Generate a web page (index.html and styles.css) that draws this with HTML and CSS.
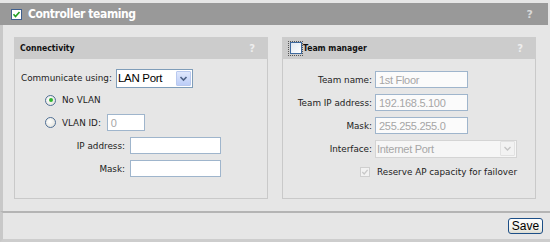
FILE: index.html
```html
<!DOCTYPE html>
<html>
<head>
<meta charset="utf-8">
<link rel="stylesheet" href="styles.css">
</head>
<body>
<div class="page">
  <div class="titlebar">
    <span class="tchk">
      <svg width="11" height="11" viewBox="0 0 11 11"><rect x="0.5" y="0.5" width="10" height="10" fill="#fff" stroke="#3f5f8f"/><path d="M2.5 5.3 L4.5 7.5 L8.5 3" fill="none" stroke="#22a022" stroke-width="1.6"/></svg>
    </span>
    <span class="title">Controller teaming</span>
    <span class="help big">?</span>
  </div>
  <div class="content">
    <div class="panel">
      <div class="phead">
        <span class="ptitle">Connectivity</span>
        <span class="help">?</span>
      </div>
      <div class="pbody lbody">
        <div class="row comm">
          <span class="lbl cw">Communicate using:</span>
          <span class="sel">
            <span class="seltxt">LAN Port</span>
            <span class="arrow"><svg width="13" height="13" viewBox="0 0 13 13"><path d="M3.5 5 L6.5 8 L9.5 5" fill="none" stroke="#4d6185" stroke-width="1.6"/></svg></span>
          </span>
        </div>
        <div class="row rad">
          <span class="radio on"><span class="dot"></span></span>
          <span class="lbl rl">No VLAN</span>
        </div>
        <div class="row rad tall">
          <span class="radio"></span>
          <span class="lbl rl">VLAN ID:</span>
          <span class="inp vid">0</span>
        </div>
        <div class="row fld tall">
          <span class="lbl fw">IP address:</span>
          <span class="inp wide"></span>
        </div>
        <div class="row fld tall">
          <span class="lbl fw">Mask:</span>
          <span class="inp wide"></span>
        </div>
      </div>
    </div>
    <div class="panel">
      <div class="phead">
        <span class="pchk"><span class="pbox"></span></span>
        <span class="ptitle">Team manager</span>
        <span class="help">?</span>
      </div>
      <div class="pbody rbody">
        <div class="row rr">
          <span class="lbl rw">Team name:</span>
          <span class="inp dis">1st Floor</span>
        </div>
        <div class="row rr">
          <span class="lbl rw">Team IP address:</span>
          <span class="inp dis">192.168.5.100</span>
        </div>
        <div class="row rr">
          <span class="lbl rw">Mask:</span>
          <span class="inp dis">255.255.255.0</span>
        </div>
        <div class="row rr">
          <span class="lbl rw">Interface:</span>
          <span class="sel dsel">
            <span class="seltxt">Internet Port</span>
            <span class="arrow darrow"><svg width="13" height="13" viewBox="0 0 13 13"><path d="M3.5 5 L6.5 8 L9.5 5" fill="none" stroke="#c4c4c4" stroke-width="1.4"/></svg></span>
          </span>
        </div>
        <div class="row rr cbrow">
          <span class="dchk"><svg width="10" height="10" viewBox="0 0 10 10"><rect x="0.5" y="0.5" width="9" height="9" fill="#f2f2f2" stroke="#cfcfcf"/><path d="M2.3 5 L4.2 7 L7.6 2.8" fill="none" stroke="#c8c8c8" stroke-width="1.3"/></svg></span>
          <span class="lbl cbl">Reserve AP capacity for failover</span>
        </div>
      </div>
    </div>
  </div>
  <div class="footer">
    <button class="save">Save</button>
  </div>
</div>
</body>
</html>
```
FILE: styles.css
```css
* { box-sizing: border-box; }
body { margin: 0; }
.page {
  width: 550px;
  height: 242px;
  background: #e6e6e6;
  padding-top: 3px;
  display: flex;
  flex-direction: column;
  font-family: "DejaVu Sans", Verdana, sans-serif;
  color: #222;
}
.titlebar {
  height: 22px;
  margin-right: 2px;
  background: #999999;
  display: flex;
  align-items: center;
  padding-left: 11px;
  padding-right: 15px;
}
.tchk { width: 11px; height: 11px; display: flex; }
.title {
  margin-left: 6px;
  color: #fff;
  font-family: "DejaVu Sans Condensed", "DejaVu Sans", sans-serif;
  font-stretch: condensed;
  font-weight: bold;
  font-size: 12px;
  letter-spacing: -0.4px;
  flex: 1;
}
.help {
  color: #eeeeee;
  font-weight: bold;
  font-size: 10px;
  font-family: "DejaVu Sans", sans-serif;
}
.help.big { font-size: 11px; color: #d8d8d8; }
.content {
  height: 186px;
  border-left: 3px solid #c8c8c8;
  display: flex;
  gap: 14px;
  padding: 12px 14px 12px 11px;
}
.panel {
  width: 254px;
  height: 162px;
  display: flex;
  flex-direction: column;
}
.phead {
  height: 22px;
  background: #cccccc;
  display: flex;
  align-items: center;
  padding-left: 6px;
  padding-right: 13px;
}
.ptitle {
  flex: 1;
  font-weight: bold;
  font-size: 8.6px;
  font-family: "DejaVu Sans Condensed", "DejaVu Sans", sans-serif;
  font-stretch: condensed;
  color: #111;
}
.pchk {
  width: 15px;
  height: 15px;
  border: 1px dotted #555;
  display: flex;
  align-items: center;
  justify-content: center;
}
.pbox {
  width: 12px;
  height: 12px;
  border: 1px solid #3f6a9f;
  background: linear-gradient(135deg, #dfe7f1, #ffffff);
}
.pbody {
  flex: 1;
  border: 1px solid #c9c9c9;
  border-top: none;
  display: flex;
  flex-direction: column;
}
.lbody { padding-top: 8px; }
.rbody { padding-top: 9px; }
.row {
  display: flex;
  align-items: center;
  height: 22px;
}
.row.tall { height: 23px; }
.lbl { font-size: 8.8px; white-space: nowrap; }
.comm { padding-left: 6px; }
.cw { width: 95px; }
.sel {
  width: 77px;
  height: 19px;
  background: #fff;
  border: 1px solid #7f9db9;
  display: flex;
  align-items: center;
  padding-left: 1px;
  padding-right: 1px;
}
.seltxt {
  flex: 1;
  font-family: "Liberation Sans", Arial, sans-serif;
  font-size: 11.5px;
  letter-spacing: -0.3px;
  color: #000;
}
.arrow {
  width: 15px;
  height: 15px;
  border: 1px solid #b9c9ef;
  background: linear-gradient(#e0e8fd, #bccdf7);
  display: flex;
  align-items: center;
  justify-content: center;
  border-radius: 1px;
}
.rad { padding-left: 30px; }
.radio {
  width: 11px;
  height: 11px;
  border-radius: 50%;
  border: 1px solid #4f6f95;
  background: radial-gradient(circle at 40% 40%, #ffffff, #dcdcd4);
  display: flex;
  align-items: center;
  justify-content: center;
}
.dot {
  width: 4px;
  height: 4px;
  border-radius: 50%;
  background: #2fb52f;
}
.rl { margin-left: 6px; }
.inp {
  height: 17px;
  background: #fff;
  border: 1px solid #9fb5cc;
  font-family: "Liberation Sans", Arial, sans-serif;
  font-size: 11px;
  letter-spacing: -0.3px;
  color: #a6a6a6;
  display: flex;
  align-items: center;
  padding-left: 3px;
}
.vid { width: 38px; margin-left: 6px; }
.fw { width: 110px; text-align: right; }
.wide { width: 91px; margin-left: 5px; }
.rw { width: 89px; text-align: right; margin-right: 3px; }
.rr { height: 23px; }
.dis { width: 93px; background: #fbfbfb; }
.dsel {
  width: 142px;
  height: 18px;
  background: #f6f6f6;
  border: 1px solid #d4d4d4;
}
.dsel .seltxt { color: #a6a6a6; font-size: 11px; }
.darrow {
  background: #f2f2f2;
  border: 1px solid #e2e2e2;
}
.cbrow { padding-left: 77px; }
.dchk { width: 10px; height: 10px; display: flex; }
.cbl { margin-left: 7px; }
.footer {
  height: 31px;
  border-left: 3px solid #c8c8c8;
  border-top: 2px solid #b4b4b4;
  border-bottom: 3px solid #cdcdcd;
  display: flex;
  justify-content: flex-end;
  align-items: flex-start;
  padding-top: 5px;
  padding-right: 7px;
}
.save {
  width: 35px;
  height: 16px;
  padding: 0;
  border: 1px solid #1d4f87;
  border-radius: 3px;
  background: linear-gradient(#ffffff, #f0f0ea 70%, #dcdcd2);
  font-family: "Liberation Sans", Arial, sans-serif;
  font-size: 12px;
  color: #000;
  line-height: 14px;
}
```
